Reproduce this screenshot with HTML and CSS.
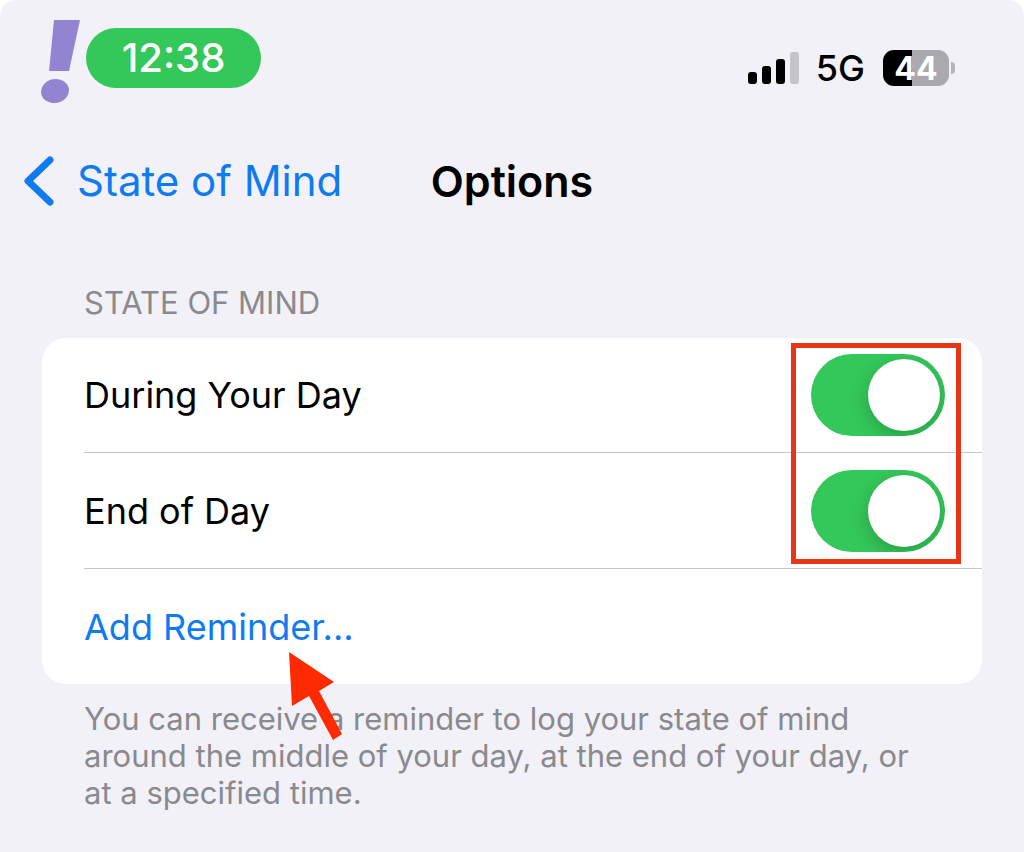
FILE: index.html
```html
<!DOCTYPE html>
<html lang="en">
<head>
    <meta charset="utf-8">
    <meta name="viewport" content="width=device-width, initial-scale=1">
    <title>Options</title>
    <link rel="stylesheet" href="styles.css">
</head>
<body>
    <div class="screen">
        <header class="status-bar">
            <div class="status-left">
                <svg class="brand" viewBox="0 0 40 84" aria-hidden="true">
                    <path d="M13 1H39L28 52H8Z"/>
                    <ellipse cx="14" cy="72" rx="14" ry="12" transform="rotate(-12 14 72)"/>
                </svg>
                <span class="clock">12:38</span>
            </div>
            <div class="status-right">
                <svg class="signal" viewBox="0 0 52 34" aria-hidden="true">
                    <rect x="0" y="21" width="9" height="12" rx="3"/>
                    <rect x="14" y="15" width="9" height="18" rx="3"/>
                    <rect x="28" y="8" width="9" height="25" rx="3"/>
                    <rect class="weak" x="42" y="1" width="9" height="32" rx="3"/>
                </svg>
                <span class="network">5G</span>
                <div class="battery"><span class="battery-level">44</span></div>
            </div>
        </header>

        <nav class="nav-bar">
            <a class="back" href="#">
                <svg class="chevron" viewBox="0 0 32 52" aria-hidden="true">
                    <path d="M27 5L5 26L27 47"/>
                </svg>
                State of Mind
            </a>
            <h1>Options</h1>
        </nav>

        <main class="content">
            <h2>State of Mind</h2>
            <div class="card">
                <div class="row">
                    <label for="during-day">During Your Day</label>
                    <input class="toggle" type="checkbox" role="switch" id="during-day" checked>
                </div>
                <div class="row">
                    <label for="end-day">End of Day</label>
                    <input class="toggle" type="checkbox" role="switch" id="end-day" checked>
                </div>
                <div class="row">
                    <button class="add" type="button">Add Reminder...</button>
                </div>
                <div class="highlight"></div>
                <svg class="arrow" viewBox="0 0 54 90" aria-hidden="true">
                    <path d="M0 0L45 30L30 39L53 82L44 88L20 44L3 54Z"/>
                </svg>
            </div>
            <p class="note">You can receive a reminder to log your state of mind around the middle of your day, at the end of your day, or at a specified time.</p>
        </main>
    </div>
</body>
</html>
```

FILE: styles.css
```css
* {
    box-sizing: border-box;
}

body {
    margin: 0;
    background: #ffffff;
    font-family: Inter, "Liberation Sans", sans-serif;
    color: #000000;
}

.screen {
    min-height: 100vh;
    background: #f2f1f8;
    border-top-left-radius: 16px;
    border-top-right-radius: 16px;
}

/* status bar */
.status-bar {
    display: flex;
    justify-content: space-between;
    align-items: flex-start;
    padding: 19px 75px 0 41px;
}

.status-left {
    display: flex;
    align-items: flex-start;
    gap: 5px;
}

.brand {
    width: 40px;
    height: 84px;
    fill: #9384d1;
}

.clock {
    margin-top: 9px;
    width: 175px;
    border-radius: 30px;
    background: #34c759;
    color: #ffffff;
    font-size: 40px;
    font-weight: 500;
    line-height: 60px;
    text-align: center;
}

.status-right {
    display: flex;
    align-items: center;
    margin-top: 31px;
    height: 36px;
}

.signal {
    width: 52px;
    height: 34px;
}

.signal .weak {
    fill: #c4c4c9;
}

.network {
    margin: 0 18px 0 16px;
    font-size: 36px;
    font-weight: 500;
    line-height: 36px;
}

.battery {
    position: relative;
    width: 66px;
    height: 36px;
    border-radius: 11px;
    background: linear-gradient(to right, #000000 44%, #a9a9ae 44%);
    color: #ffffff;
    font-size: 32px;
    font-weight: 700;
    line-height: 38px;
    text-align: center;
}

.battery::after {
    content: "";
    position: absolute;
    top: 12px;
    right: -6px;
    width: 4px;
    height: 12px;
    border-radius: 0 6px 6px 0;
    background: #b4b4b9;
}

/* navigation */
.nav-bar {
    display: grid;
    grid-template-columns: 1fr auto 1fr;
    align-items: center;
    margin-top: 50px;
    padding: 0 23px;
}

.back {
    display: flex;
    align-items: center;
    gap: 22px;
    color: #0f7bf0;
    font-size: 42px;
    line-height: 56px;
    text-decoration: none;
    white-space: nowrap;
}

.chevron {
    width: 32px;
    height: 52px;
    fill: none;
    stroke: #0f7bf0;
    stroke-width: 7;
    stroke-linecap: round;
    stroke-linejoin: round;
}

h1 {
    margin: 0;
    font-size: 43px;
    font-weight: 600;
    line-height: 56px;
}

/* settings list */
.content {
    padding: 75px 42px 40px;
}

h2 {
    margin: 0 0 17px;
    padding: 0 42px;
    color: #8a8a8e;
    font-size: 31px;
    font-weight: 400;
    line-height: 37px;
    text-transform: uppercase;
}

.card {
    position: relative;
    border-radius: 24px;
    background: #ffffff;
}

.row {
    display: flex;
    justify-content: space-between;
    align-items: center;
    height: 114px;
    margin-left: 42px;
    padding-right: 37px;
    font-size: 36px;
}

.row + .row {
    height: 116px;
    border-top: 1px solid #c8c8cb;
}

.toggle {
    appearance: none;
    display: flex;
    align-items: center;
    justify-content: flex-end;
    width: 134px;
    height: 82px;
    margin: 0;
    padding: 5px;
    border-radius: 41px;
    background: #e9e9ea;
    overflow: hidden;
    cursor: pointer;
}

.toggle::before {
    content: "";
    width: 72px;
    height: 72px;
    border-radius: 50%;
    background: #ffffff;
    box-shadow: 0 6px 18px rgba(0, 0, 0, 0.2);
}

.toggle:checked {
    background: #34c759;
}

.toggle:not(:checked) {
    justify-content: flex-start;
}

.add {
    border: none;
    padding: 0;
    background: none;
    color: #0f7bf0;
    font: inherit;
    cursor: pointer;
}

.highlight {
    position: absolute;
    top: 5px;
    right: 21px;
    width: 170px;
    height: 221px;
    border: 5px solid #e63517;
    pointer-events: none;
}

.arrow {
    position: absolute;
    left: 247px;
    bottom: -58px;
    width: 54px;
    height: 90px;
    fill: #ff2a00;
    pointer-events: none;
}

.note {
    margin: 16px 0 0;
    padding: 0 60px 0 42px;
    color: #8a8a8e;
    font-size: 31px;
    line-height: 37px;
}
```
